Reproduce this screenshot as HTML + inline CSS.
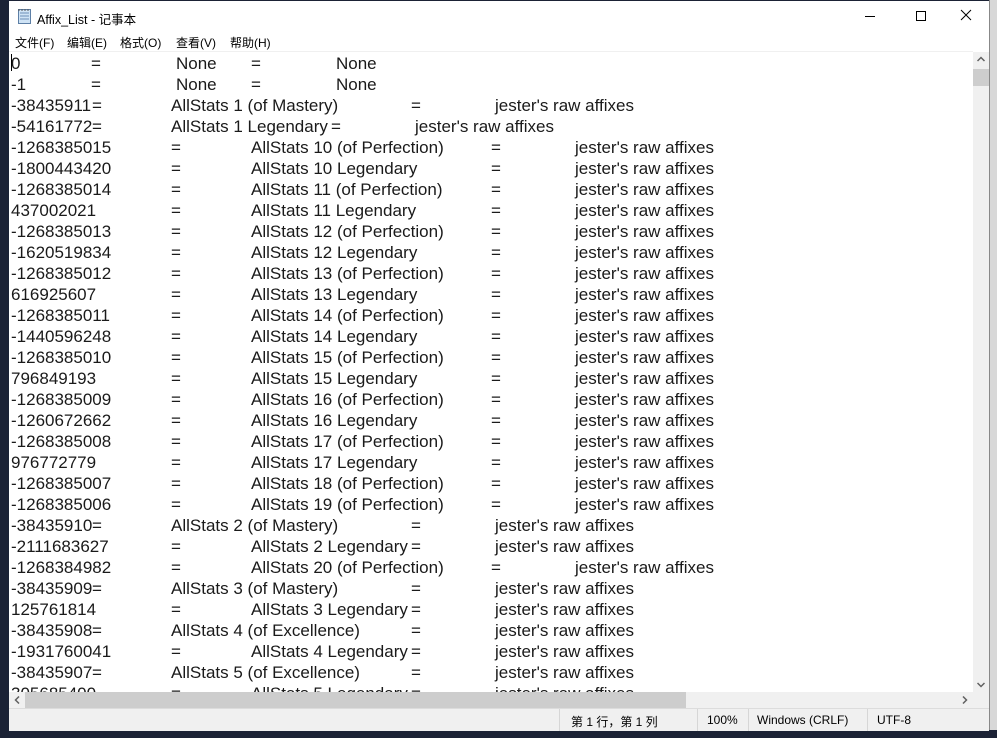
<!DOCTYPE html>
<html><head><meta charset="utf-8"><style>
body{margin:0;width:997px;height:738px;overflow:hidden;background:#1b2235;font-family:"Liberation Sans","Noto Sans CJK SC",sans-serif;position:relative}
.win{position:absolute;left:9px;top:1px;width:980px;height:729px;background:#fff}
.strip{position:absolute;left:989px;top:0;width:8px;height:730px;background:#d8d8d8;border-left:1px solid #888}
.title{position:absolute;left:0;top:0;width:980px;height:30px;font-size:12.5px;color:#000}
.menu{position:absolute;left:0;top:30px;width:980px;height:20px;font-size:12px;color:#000}
.menu span{position:absolute;top:3px}
.txt{position:absolute;left:0;top:50px;width:964px;height:641px;overflow:hidden;font-size:17px;color:#1a1a1a;border-top:1px solid #f0f0f0}
.r{position:absolute;height:21px;line-height:21px;white-space:pre;width:964px}
.r span{position:absolute;top:0}
.vs{position:absolute;left:964px;top:51px;width:16px;height:640px;background:#f0f0f0}
.hs{position:absolute;left:0;top:691px;width:964px;height:16px;background:#f0f0f0}
.sb{position:absolute;left:0;top:707px;width:980px;height:22px;background:#f0f0f0;border-top:1px solid #dcdcdc;font-size:12px;color:#000}
.sb span{position:absolute;top:4px}
.sep{position:absolute;top:0;width:1px;height:22px;background:#d6d6d6}
</style></head><body>
<div class="strip"></div>
<div class="win">
 <div class="title">
  <svg style="position:absolute;left:8px;top:7px" width="15" height="16" viewBox="0 0 15 16"><rect x="1.5" y="1.5" width="12" height="14" fill="#cfe3f5" stroke="#5d7fa6"/><path d="M3 5h9M3 8h9M3 11h9" stroke="#6d8fb6"/><path d="M2 1v2M5 1v2M8 1v2M11 1v2" stroke="#555"/></svg>
  <span style="position:absolute;left:28px;top:8px">Affix_List - 记事本</span>
  <svg style="position:absolute;left:855px;top:9px" width="12" height="12"><path d="M1 6.5h10" stroke="#000"/></svg>
  <svg style="position:absolute;left:906px;top:9px" width="12" height="12"><rect x="1.5" y="1.5" width="9" height="9" fill="none" stroke="#000"/></svg>
  <svg style="position:absolute;left:951px;top:8px" width="12" height="12"><path d="M1 1l10 10M11 1L1 11" stroke="#000"/></svg>
 </div>
 <div class="menu"><span style="left:6px">文件(F)</span><span style="left:58px">编辑(E)</span><span style="left:111px">格式(O)</span><span style="left:167px">查看(V)</span><span style="left:221px">帮助(H)</span></div>
 <div class="txt" id="t"></div>
 <div style="position:absolute;left:2px;top:53px;width:1px;height:17px;background:#000"></div>
 <div class="vs"><div style="position:absolute;left:0;top:17px;width:16px;height:17px;background:#cdcdcd"></div>
  <svg style="position:absolute;left:4px;top:4px" width="8" height="6"><path d="M0.5 5L4 1.5 7.5 5" fill="none" stroke="#606060" stroke-width="1.5"/></svg>
  <svg style="position:absolute;left:4px;top:630px" width="8" height="6"><path d="M0.5 1L4 4.5 7.5 1" fill="none" stroke="#606060" stroke-width="1.5"/></svg></div>
 <div class="hs"><div style="position:absolute;left:16px;top:0;width:661px;height:16px;background:#cdcdcd"></div>
  <svg style="position:absolute;left:5px;top:4px" width="6" height="8"><path d="M5 0.5L1.5 4 5 7.5" fill="none" stroke="#606060" stroke-width="1.5"/></svg>
  <svg style="position:absolute;left:953px;top:4px" width="6" height="8"><path d="M1 0.5L4.5 4 1 7.5" fill="none" stroke="#606060" stroke-width="1.5"/></svg></div>
 <div style="position:absolute;left:964px;top:691px;width:16px;height:16px;background:#f0f0f0"></div>
 <div class="sb">
  <div class="sep" style="left:550px"></div><span style="left:562px">第 1 行，第 1 列</span>
  <div class="sep" style="left:688px"></div><span style="left:698px">100%</span>
  <div class="sep" style="left:739px"></div><span style="left:748px">Windows (CRLF)</span>
  <div class="sep" style="left:858px"></div><span style="left:868px">UTF-8</span>
 </div>
</div>
<script>
var rows=[
["0",[91,"="],[176,"None"],[251,"="],[336,"None"]],
["-1",[91,"="],[176,"None"],[251,"="],[336,"None"]],
["-38435911",[92,"="],[171,"AllStats 1 (of Mastery)"],[411,"="],[495,"jester's raw affixes"]],
["-54161772",[92,"="],[171,"AllStats 1 Legendary"],[331,"="],[415,"jester's raw affixes"]]];
var L=[["-1268385015","10 (of Perfection)"],["-1800443420","10 Legendary"],["-1268385014","11 (of Perfection)"],["437002021","11 Legendary"],["-1268385013","12 (of Perfection)"],["-1620519834","12 Legendary"],["-1268385012","13 (of Perfection)"],["616925607","13 Legendary"],["-1268385011","14 (of Perfection)"],["-1440596248","14 Legendary"],["-1268385010","15 (of Perfection)"],["796849193","15 Legendary"],["-1268385009","16 (of Perfection)"],["-1260672662","16 Legendary"],["-1268385008","17 (of Perfection)"],["976772779","17 Legendary"],["-1268385007","18 (of Perfection)"],["-1268385006","19 (of Perfection)"]];
L.forEach(function(a){rows.push([a[0],[171,"="],[251,"AllStats "+a[1]],[491,"="],[575,"jester's raw affixes"]]);});
var J="jester's raw affixes";
rows.push(["-38435910",[92,"="],[171,"AllStats 2 (of Mastery)"],[411,"="],[495,J]]);
rows.push(["-2111683627",[171,"="],[251,"AllStats 2 Legendary"],[411,"="],[495,J]]);
rows.push(["-1268384982",[171,"="],[251,"AllStats 20 (of Perfection)"],[491,"="],[575,J]]);
rows.push(["-38435909",[92,"="],[171,"AllStats 3 (of Mastery)"],[411,"="],[495,J]]);
rows.push(["125761814",[171,"="],[251,"AllStats 3 Legendary"],[411,"="],[495,J]]);
rows.push(["-38435908",[92,"="],[171,"AllStats 4 (of Excellence)"],[411,"="],[495,J]]);
rows.push(["-1931760041",[171,"="],[251,"AllStats 4 Legendary"],[411,"="],[495,J]]);
rows.push(["-38435907",[92,"="],[171,"AllStats 5 (of Excellence)"],[411,"="],[495,J]]);
rows.push(["305685400",[171,"="],[251,"AllStats 5 Legendary"],[411,"="],[495,J]]);
var h="";
rows.forEach(function(r,i){h+='<div class="r" style="top:'+(1+21*i)+'px"><span style="left:2px">'+r[0]+'</span>';for(var k=1;k<r.length;k++)h+='<span style="left:'+(r[k][0]-9)+'px">'+r[k][1]+'</span>';h+='</div>';});
document.getElementById('t').innerHTML=h;
</script>
</body></html>
